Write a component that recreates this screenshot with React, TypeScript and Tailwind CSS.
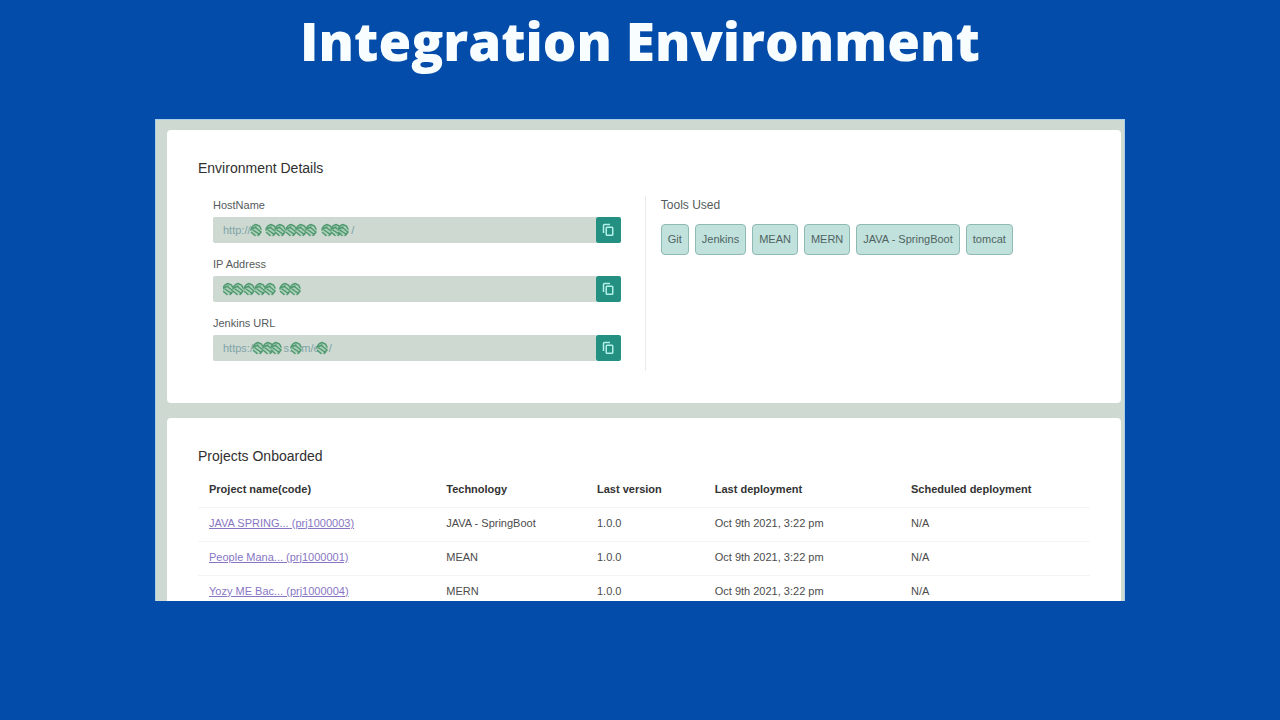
const fields = [
  { id: 'hostname', label: 'HostName', value: 'http://' + ' '.repeat(33) + '/', marks: [33, 48, 57, 68, 78, 88, 104, 113, 120] },
  { id: 'ip', label: 'IP Address', value: '', marks: [5, 15, 26, 37, 47, 62, 72] },
  { id: 'jenkins', label: 'Jenkins URL', value: 'https:/' + ' '.repeat(10) + 's.   m/e   /', marks: [35, 45, 53, 73, 99] },
];

const tools = ['Git', 'Jenkins', 'MEAN', 'MERN', 'JAVA - SpringBoot', 'tomcat'];

const projects = [
  { name: 'JAVA SPRING... (prj1000003)', tech: 'JAVA - SpringBoot' },
  { name: 'People Mana... (prj1000001)', tech: 'MEAN' },
  { name: 'Yozy ME Bac... (prj1000004)', tech: 'MERN' },
];

function Scribble({ marks }: { marks: number[] }) {
  return (
    <svg className="absolute left-[10px] top-[6px] pointer-events-none" width="140" height="14" viewBox="0 0 140 14" fill="none" aria-hidden="true">
      {marks.map((x) => (
        <g key={x} transform={`translate(${x} 7)`}>
          <path d="M-3 -5L1 -6L5 -3L6 1L3 5L-1 6L-5 3L-6 -1Z" fill="#9fccae" fillOpacity="0.75" />
          <path
            d="M-5 0C-5 -3 -2 -5 0 -5.5L3.5 -4L5 -1M-3.5 -1.5L0 -3M-3 0L3.5 4.5M0 -2L5 2L2 5.5M-4.5 2.5L-1 5.5"
            stroke="#4f9870"
            strokeWidth="1.4"
            strokeLinecap="round"
          />
        </g>
      ))}
    </svg>
  );
}

function CopyIcon() {
  return (
    <svg width="12" height="14" viewBox="0 0 12 14" fill="none" stroke="currentColor" strokeWidth="1.5" aria-hidden="true">
      <path d="M1.5 10V2.5a1 1 0 0 1 1-1H8" />
      <rect x="4.25" y="4.25" width="6.5" height="8" rx="0.8" />
    </svg>
  );
}

export default function App() {
  return (
    <div className="flex h-screen flex-col bg-[#044caa] font-['Liberation_Sans',Arial,sans-serif]">
      <h1 className="h-[119px] shrink-0 pt-[9px] text-center font-['Open_Sans',sans-serif] text-[53px] font-extrabold leading-[64px] text-[#f8fdff]">
        Integration Environment
      </h1>

      <main className="mx-auto mb-[119px] min-h-0 w-full max-w-[970px] flex-1 overflow-hidden border border-b-0 border-[#a9cdea] bg-[#cdd9d1] pt-[10px] pl-[11px] pr-[3px]">
        {/* Environment details */}
        <section className="rounded bg-white px-[31px] pt-7 pb-8">
          <h2 className="text-[14px] leading-5 text-[#303030]">Environment Details</h2>
          <div className="mt-[18px] grid grid-cols-[50.2%_1fr]">
            <div className="flex flex-col gap-3 border-r border-[#e9ebec] pl-[15px] pr-6 pb-[10px]">
              {fields.map((f) => (
                <div key={f.id}>
                  <label htmlFor={f.id} className="block text-[11px] leading-[18px] text-[#555b5b]">
                    {f.label}
                  </label>
                  <div className="relative mt-[3px] flex h-[26px]">
                    <input
                      id={f.id}
                      readOnly
                      defaultValue={f.value}
                      className="min-w-0 flex-1 rounded-l-xs bg-[#cdd9d1] px-[10px] text-[11px] text-[#7fa4a8] outline-none"
                    />
                    <Scribble marks={f.marks} />
                    <button
                      type="button"
                      aria-label={`Copy ${f.label}`}
                      className="flex w-[25px] items-center justify-center rounded-xs bg-[#249082] text-[#b4f0ea]"
                    >
                      <CopyIcon />
                    </button>
                  </div>
                </div>
              ))}
            </div>

            <div className="pl-[15px]">
              <h3 className="text-[12px] leading-[18px] text-[#555b5b]">Tools Used</h3>
              <ul className="mt-[10px] flex flex-wrap gap-[6px]">
                {tools.map((tool) => (
                  <li key={tool} className="rounded border border-[#8fbab4] bg-[#c1e1dc] px-[6px] text-[11px] leading-[29px] text-[#4f6462]">
                    {tool}
                  </li>
                ))}
              </ul>
            </div>
          </div>
        </section>

        {/* Projects */}
        <section className="mt-[15px] rounded bg-white px-[31px] pt-7 pb-8">
          <h2 className="text-[14px] leading-5 text-[#303030]">Projects Onboarded</h2>
          <table className="mt-[7px] w-full table-fixed text-left text-[11px] text-[#4c4c4c]">
            <thead>
              <tr className="h-[34px] border-b border-[#f3f4f4] text-[#333333]">
                <th className="w-[26.6%] pl-[11px] pb-[2px]">Project name(code)</th>
                <th className="w-[16.9%] pl-[11px] pb-[2px]">Technology</th>
                <th className="w-[13.2%] pl-[11px] pb-[2px]">Last version</th>
                <th className="w-[22%] pl-[11px] pb-[2px]">Last deployment</th>
                <th className="pl-[11px] pb-[2px]">Scheduled deployment</th>
              </tr>
            </thead>
            <tbody>
              {projects.map((p) => (
                <tr key={p.name} className="h-[34px] border-b border-[#f3f4f4]">
                  <td className="pl-[11px] pb-[2px]">
                    <a href="#" className="text-[#8876c4] underline">{p.name}</a>
                  </td>
                  <td className="pl-[11px] pb-[2px]">{p.tech}</td>
                  <td className="pl-[11px] pb-[2px]">1.0.0</td>
                  <td className="pl-[11px] pb-[2px]">Oct 9th 2021, 3:22 pm</td>
                  <td className="pl-[11px] pb-[2px]">N/A</td>
                </tr>
              ))}
            </tbody>
          </table>
        </section>
      </main>
    </div>
  );
}
